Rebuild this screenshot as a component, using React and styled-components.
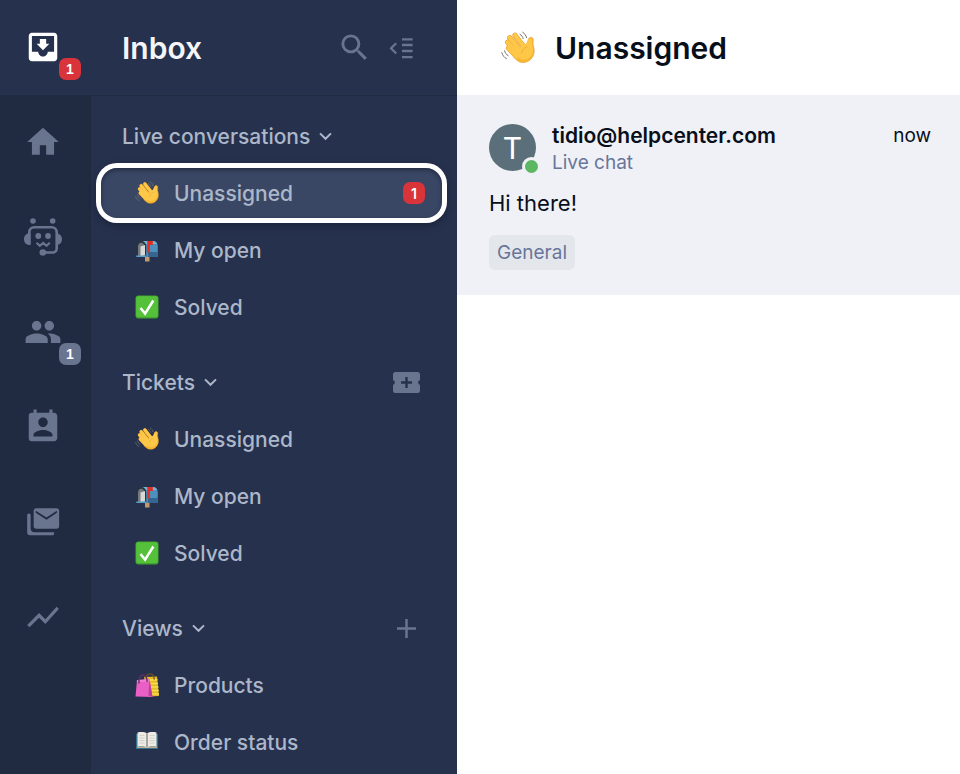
import styled, { createGlobalStyle, css } from 'styled-components';
import {
  MdHome,
  MdMoveToInbox,
  MdPeople,
  MdPermContactCalendar,
  MdSearch,
  MdShowChart,
} from 'react-icons/md';

const GlobalStyle = createGlobalStyle`
  * {
    box-sizing: border-box;
  }

  body {
    margin: 0;
    background: #ffffff;
    font-family: Inter, "Liberation Sans", sans-serif;
    color: #080f1a;
  }
`;

const Shell = styled.div`
  display: grid;
  grid-template-columns: 91px 366px 1fr;
  min-height: 100vh;
`;

const Rail = styled.nav`
  background: #202b42;
`;

const RailButton = styled.button`
  position: relative;
  display: flex;
  align-items: center;
  justify-content: center;
  width: 100%;
  height: 95px;
  padding: 0 5px 2px 0;
  border: 0;
  background: ${({ $active }) => ($active ? '#26314d' : 'transparent')};
  color: ${({ $active }) => ($active ? '#ffffff' : '#69748f')};
  cursor: pointer;
`;

const Badge = styled.span`
  display: flex;
  align-items: center;
  justify-content: center;
  width: 22px;
  height: 22px;
  border-radius: 7px;
  background: ${({ $muted }) => ($muted ? '#69748f' : '#d8343a')};
  color: #ffffff;
  font-size: 14px;
  font-weight: 600;
`;

const RailBadge = styled(Badge)`
  position: absolute;
  top: 58px;
  left: 59px;
`;

const Sidebar = styled.aside`
  background: #26314d;
`;

const SidebarHeader = styled.header`
  display: flex;
  align-items: center;
  height: 96px;
  padding: 0 44px 0 31px;
  border-bottom: 1px solid #202b42;
`;

const SidebarTitle = styled.h1`
  flex: 1;
  margin: 0;
  color: #f3f5f9;
  font-size: 30px;
  font-weight: 600;
`;

const IconButton = styled.button`
  display: flex;
  align-items: center;
  justify-content: center;
  padding: 0;
  border: 0;
  background: transparent;
  color: #69748f;
  cursor: pointer;
`;

const HeaderActions = styled.div`
  display: flex;
  align-items: center;
  gap: 17px;
`;

const Sections = styled.div`
  display: flex;
  flex-direction: column;
  gap: 18px;
  padding-top: 12px;
`;

const SectionHeader = styled.div`
  display: flex;
  align-items: center;
  justify-content: space-between;
  height: 57px;
  padding: 0 37px 0 31px;
`;

const SectionToggle = styled.button`
  display: flex;
  align-items: center;
  gap: 9px;
  padding: 0;
  border: 0;
  background: transparent;
  color: #acb7ca;
  font-family: inherit;
  font-size: 21px;
  font-weight: 500;
  cursor: pointer;
`;

const FolderList = styled.ul`
  margin: 0;
  padding: 0 15px 0 10px;
  list-style: none;
`;

const FolderItem = styled.li`
  padding: 3px 0 4px;
`;

const Folder = styled.button`
  display: flex;
  align-items: center;
  gap: 15px;
  width: 100%;
  height: 50px;
  padding: 0 17px 0 34px;
  border: 0;
  border-radius: 16px;
  background: transparent;
  color: #acb7ca;
  font-family: inherit;
  font-size: 21px;
  font-weight: 500;
  text-align: left;
  cursor: pointer;

  ${({ $active }) =>
    $active &&
    css`
      background: #3a4764;
      box-shadow:
        inset 0 2px 4px rgba(18, 25, 44, 0.6),
        0 0 0 5px #ffffff,
        0 3px 6px 5px rgba(18, 25, 44, 0.5);
    `}
`;

const FolderName = styled.span`
  flex: 1;
`;

const Main = styled.main`
  background: #ffffff;
`;

const MainHeader = styled.header`
  display: flex;
  align-items: center;
  gap: 20px;
  height: 95px;
  padding: 0 32px 0 44px;
`;

const MainTitle = styled.h2`
  margin: 0;
  font-size: 30px;
  font-weight: 600;
`;

const Conversation = styled.a`
  display: flex;
  flex-direction: column;
  align-items: flex-start;
  padding: 27px 29px 25px 32px;
  background: #eff1f6;
  color: inherit;
  text-decoration: none;
`;

const ConversationTop = styled.div`
  display: flex;
  align-items: flex-start;
  gap: 16px;
  width: 100%;
`;

const Avatar = styled.div`
  position: relative;
  display: flex;
  align-items: center;
  justify-content: center;
  width: 47px;
  height: 47px;
  margin-top: 2px;
  border-radius: 50%;
  background: #5a6f79;
  color: #ffffff;
  font-size: 30px;
`;

const OnlineDot = styled.span`
  position: absolute;
  right: -5px;
  bottom: -5px;
  width: 19px;
  height: 19px;
  border: 3px solid #eff1f6;
  border-radius: 50%;
  background: #5bb761;
`;

const Contact = styled.div`
  flex: 1;
`;

const ContactName = styled.div`
  font-size: 21px;
  font-weight: 600;
  line-height: 27px;
`;

const Channel = styled.div`
  color: #69759a;
  font-size: 19px;
  line-height: 27px;
`;

const Time = styled.time`
  font-size: 19px;
  line-height: 27px;
`;

const Message = styled.p`
  margin: 13px 0 18px;
  font-size: 22px;
  line-height: 28px;
`;

const Tag = styled.span`
  padding: 4px 8px;
  border-radius: 6px;
  background: #e3e7eb;
  color: #69759a;
  font-size: 19px;
  line-height: 27px;
`;

const Chevron = () => (
  <svg width="13" height="9" viewBox="0 0 13 9" fill="none" aria-hidden="true">
    <path d="M1 1.4l5.5 5.4L12 1.4" stroke="currentColor" strokeWidth="2" />
  </svg>
);

const CollapseIcon = () => (
  <svg width="24" height="24" viewBox="0 0 24 24" fill="none" stroke="currentColor" strokeWidth="2.3">
    <path d="M7.2 7.2L2 12.3l5.2 5.2M13 3.3h10.6M13 9h10.6M13 15h10.6M13 21.2h10.6" />
  </svg>
);

const TicketPlusIcon = () => (
  <svg width="27" height="21" viewBox="0 0 27 21">
    <path
      fill="currentColor"
      fillRule="evenodd"
      d="M2.5 0h22A2.5 2.5 0 0127 2.5V8a2.6 2.6 0 000 5v5.5a2.5 2.5 0 01-2.5 2.5h-22A2.5 2.5 0 010 18.5V13a2.6 2.6 0 000-5V2.5A2.5 2.5 0 012.5 0zM12.3 5v4.3H8v2.4h4.3V16h2.4v-4.3H19V9.3h-4.3V5z"
    />
  </svg>
);

const PlusIcon = () => (
  <svg width="27" height="19" viewBox="0 0 27 19" stroke="currentColor" strokeWidth="2.5">
    <path d="M13.5 0v19M4 9.5h19" />
  </svg>
);

const BotIcon = () => (
  <svg width="38" height="38" viewBox="0 0 38 38" fill="currentColor">
    <circle cx="9" cy="3" r="2.8" />
    <circle cx="28.7" cy="3" r="2.8" />
    <path d="M6.5 15.5v11.2H4.8C2 26.7 0 24.2 0 21.2s2-5.7 4.8-5.7z" />
    <path d="M33.5 15.5C36.3 16 38 18.4 38 21.2s-1.7 5.2-4.5 5.5z" />
    <path
      d="M5.3 26.7V14.3a5 5 0 015-5h17.4a5 5 0 015 5v16.2a4 4 0 01-4 4H19"
      fill="none"
      stroke="currentColor"
      strokeWidth="2.6"
    />
    <circle cx="14.3" cy="18" r="2.9" />
    <circle cx="24" cy="18" r="2.9" />
    <path
      d="M12.5 24.8l3.3 3 3.4-2.8 3.3 2.8 3.3-3"
      fill="none"
      stroke="currentColor"
      strokeWidth="2.2"
    />
    <circle cx="18.8" cy="34.5" r="3.3" />
  </svg>
);

const MailsIcon = () => (
  <svg width="38" height="38" viewBox="0 0 24 24" fill="currentColor">
    <path d="M3.2 6.7H2.9A1 1 0 002 7.7V18.5A1.9 1.9 0 003.9 20.4H18a1 1 0 001-1v-.9H6.7A2.5 2.5 0 014.2 16V7.7a1 1 0 00-1-1z" />
    <path
      fillRule="evenodd"
      d="M7.8 3.3h12.7A1.7 1.7 0 0122.2 5v9.5a1.7 1.7 0 01-1.7 1.7H7.8a1.7 1.7 0 01-1.7-1.7V5a1.7 1.7 0 011.7-1.7zM7.4 4.9v1.3l6.8 4.3 6.6-4.3V4.9l-6.6 4.2z"
    />
  </svg>
);

const Wave = ({ size = 24 }) => (
  <svg width={size} height={size} viewBox="0 0 34 34" fill="none" strokeLinecap="round" aria-hidden="true">
    <g stroke="#e79b2d" strokeWidth="5.2">
      <path d="M14 4.3l9 11.5M8.8 6.8l10 12.5M6.6 11.3l10 11.5M7.5 17l8 8.5" />
    </g>
    <path
      d="M23.5 14.5c2-1 2.8-2.6 3.6-5.4.6-2.3 2-3.2 3.7-2.6 1.5.6 1.8 2.3 1.3 4.3-.5 2.3.9 4.9 1.1 8.2.4 7-4.8 12.6-11.2 12.6-3.6 0-5.9-1.8-8.7-4.8z"
      fill="#f7b731"
      stroke="#e79b2d"
      strokeWidth=".6"
    />
    <g stroke="#fdc847" strokeWidth="4.2">
      <path d="M14 4.3l9 11.5M8.8 6.8l10 12.5M6.6 11.3l10 11.5M7.5 17l8 8.5" />
    </g>
    <path
      d="M20 15.5l4-2c2-1 3-3 3.8-5 .8-1.5 3.5-1.5 3.3.9-.4 3.8.5 6 .9 9 .7 5.6-4.3 10.3-9.4 10.3-4 0-6.4-3.4-8.6-6z"
      fill="#fdc847"
    />
    <path d="M20.5 22c.5-3 2.5-5.2 5.4-6" stroke="#eda934" strokeWidth=".9" />
    <path
      d="M19 3.3c1.6.9 2.7 2.5 3.2 4.3M21.7 1.2c2 1.3 3.3 3.2 3.9 5.5M3.6 19.7c.4 2.2 1.6 3.8 3.5 4.9M.9 21.8c.6 2.6 2.2 4.6 4.6 5.9"
      stroke="#77756f"
      strokeWidth="1"
    />
  </svg>
);

const Mailbox = () => (
  <svg width="24" height="24" viewBox="0 0 24 24" aria-hidden="true">
    <path d="M10 18h4.5v5.5H10z" fill="#c49a6c" />
    <path d="M6 3h12c3 0 4.800 2.500 4.800 5.500V19H6z" fill="#4d8fbd" />
    <path d="M6 3h12c2 0 3.500 1 4.200 3H8z" fill="#75b2d3" />
    <path d="M13 14h9.800v5H13z" fill="#35668f" />
    <path d="M1.300 19V8.500C1.300 5 3.500 3 6.200 3s5 2 5 5.500V19z" fill="#28343e" />
    <path d="M3 18V9c0-2.600 1.300-4.300 3.200-4.300S9.500 6.400 9.500 9v9z" fill="#737b81" />
    <path d="M5.500 8.500L10 7v10.500l-4.500.5z" fill="#d8d9d7" />
    <path d="M1.300 17.500h9.900V19H1.300z" fill="#58a0c9" />
    <path d="M12.300 3h5.500v4h-3v7.500h-2.500z" fill="#e02e24" />
  </svg>
);

const CheckMark = () => (
  <svg width="24" height="24" viewBox="0 0 24 24" aria-hidden="true">
    <rect x=".5" y=".5" width="23" height="23" rx="3" fill="#41a52e" />
    <rect x="1.2" y="1.2" width="21.6" height="20.8" rx="2.5" fill="#55c13b" />
    <path d="M5.5 13l4.600 5.600L18.300 5.500" fill="none" stroke="#ffffff" strokeWidth="2.5" />
  </svg>
);

const Bags = () => (
  <svg width="24" height="24" viewBox="0 0 24 24" fill="none" aria-hidden="true">
    <path d="M9 4l13-.5L24 23l-10 .5z" fill="#e6bb27" />
    <path d="M9.5 7.2l13-.4M15 10.5h8M16 14h7.4M17 17.5h6.7M17 21h7" stroke="#f8dd50" strokeWidth="1.5" />
    <path d="M11.5 6.5C11 2.5 12.5.8 15 .8s4 2 4.3 5.7" stroke="#6d5329" strokeWidth="1.3" />
    <path d="M2 7l12.500-.8L17.500 24 .5 23.500z" fill="#e95fc4" />
    <path d="M14.5 6.2L17.5 24l-4-1.5z" fill="#b8429b" />
    <path d="M2 7l12.5-.8.4 2.3-13.1.5z" fill="#f27cd3" />
    <path d="M4 10.5C3.5 5.5 5.2 2 8 2s4 3 4.2 7" stroke="#652d66" strokeWidth="1.3" />
  </svg>
);

const Book = () => (
  <svg width="24" height="24" viewBox="0 0 24 24" aria-hidden="true">
    <path d="M1 4h22v15H1z" fill="#34728d" />
    <path d="M2 16.5h20V18H2z" fill="#bfae92" />
    <path
      d="M2.5 2.5c4-.8 7.5-.4 9.5.9 2-1.3 5.5-1.7 9.500-.9v14c-4-.6-7.500-.3-9.500 1-2-1.300-5.500-1.600-9.500-1z"
      fill="#eeebe5"
    />
    <path d="M11 3.300h2V17h-2z" fill="#a6a5a3" />
    <path
      d="M4.300 5.500h5.200M4.300 8h5.200M4.300 10.500h5.200M4.300 13h5.200M14.500 5.500h5.200M14.500 8h5.200M14.500 10.500h5.200M14.500 13h5.200"
      stroke="#cac9c7"
      strokeWidth=".8"
    />
  </svg>
);

const railItems = [
  { label: 'Inbox', icon: <MdMoveToInbox size={38} />, active: true, count: 1 },
  { label: 'Home', icon: <MdHome size={38} /> },
  { label: 'Chatbots', icon: <BotIcon /> },
  { label: 'Visitors', icon: <MdPeople size={38} />, count: 1 },
  { label: 'Contacts', icon: <MdPermContactCalendar size={38} /> },
  { label: 'Mailing', icon: <MailsIcon /> },
  { label: 'Analytics', icon: <MdShowChart size={38} /> },
];

const sections = [
  {
    title: 'Live conversations',
    folders: [
      { name: 'Unassigned', icon: <Wave />, active: true, count: 1 },
      { name: 'My open', icon: <Mailbox /> },
      { name: 'Solved', icon: <CheckMark /> },
    ],
  },
  {
    title: 'Tickets',
    action: { label: 'New ticket', icon: <TicketPlusIcon /> },
    folders: [
      { name: 'Unassigned', icon: <Wave /> },
      { name: 'My open', icon: <Mailbox /> },
      { name: 'Solved', icon: <CheckMark /> },
    ],
  },
  {
    title: 'Views',
    action: { label: 'New view', icon: <PlusIcon /> },
    folders: [
      { name: 'Products', icon: <Bags /> },
      { name: 'Order status', icon: <Book /> },
    ],
  },
];

const Section = ({ title, action, folders }) => (
  <section>
    <SectionHeader>
      <SectionToggle aria-expanded="true">
        {title}
        <Chevron />
      </SectionToggle>
      {action && <IconButton aria-label={action.label}>{action.icon}</IconButton>}
    </SectionHeader>
    <FolderList>
      {folders.map(({ name, icon, active, count }) => (
        <FolderItem key={name}>
          <Folder $active={active}>
            {icon}
            <FolderName>{name}</FolderName>
            {count && <Badge>{count}</Badge>}
          </Folder>
        </FolderItem>
      ))}
    </FolderList>
  </section>
);

const App = () => (
  <>
    <GlobalStyle />
    <Shell>
      <Rail>
        {railItems.map(({ label, icon, active, count }) => (
          <RailButton key={label} aria-label={label} $active={active}>
            {icon}
            {count && <RailBadge $muted={!active}>{count}</RailBadge>}
          </RailButton>
        ))}
      </Rail>
      <Sidebar>
        <SidebarHeader>
          <SidebarTitle>Inbox</SidebarTitle>
          <HeaderActions>
            <IconButton aria-label="Search">
              <MdSearch size={35} />
            </IconButton>
            <IconButton aria-label="Collapse">
              <CollapseIcon />
            </IconButton>
          </HeaderActions>
        </SidebarHeader>
        <Sections>
          {sections.map((section) => (
            <Section key={section.title} {...section} />
          ))}
        </Sections>
      </Sidebar>
      <Main>
        <MainHeader>
          <Wave size={34} />
          <MainTitle>Unassigned</MainTitle>
        </MainHeader>
        <Conversation href="#tidio">
          <ConversationTop>
            <Avatar>
              T
              <OnlineDot />
            </Avatar>
            <Contact>
              <ContactName>tidio@helpcenter.com</ContactName>
              <Channel>Live chat</Channel>
            </Contact>
            <Time>now</Time>
          </ConversationTop>
          <Message>Hi there!</Message>
          <Tag>General</Tag>
        </Conversation>
      </Main>
    </Shell>
  </>
);

export default App;
